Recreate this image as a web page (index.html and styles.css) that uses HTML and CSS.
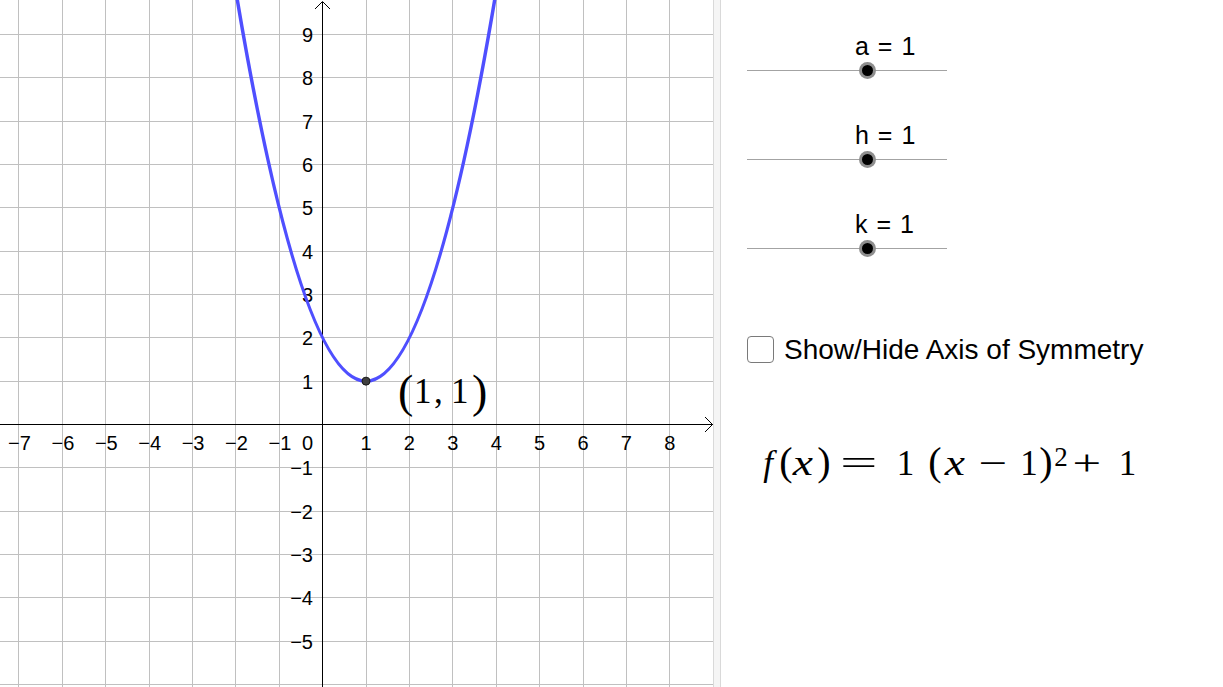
FILE: index.html
```html
<!DOCTYPE html>
<html>
<head>
<meta charset="utf-8">
<title>Vertex form</title>
<link rel="stylesheet" href="styles.css">
</head>
<body>
<div class="app">
  <div class="graph">
    <svg width="713" height="687" viewBox="0 0 713 687">
      <g class="grid">
        <line x1="18.8" y1="0" x2="18.8" y2="687"/>
        <line x1="62.2" y1="0" x2="62.2" y2="687"/>
        <line x1="105.6" y1="0" x2="105.6" y2="687"/>
        <line x1="149" y1="0" x2="149" y2="687"/>
        <line x1="192.4" y1="0" x2="192.4" y2="687"/>
        <line x1="235.8" y1="0" x2="235.8" y2="687"/>
        <line x1="279.2" y1="0" x2="279.2" y2="687"/>
        <line x1="366" y1="0" x2="366" y2="687"/>
        <line x1="409.4" y1="0" x2="409.4" y2="687"/>
        <line x1="452.8" y1="0" x2="452.8" y2="687"/>
        <line x1="496.2" y1="0" x2="496.2" y2="687"/>
        <line x1="539.6" y1="0" x2="539.6" y2="687"/>
        <line x1="583" y1="0" x2="583" y2="687"/>
        <line x1="626.4" y1="0" x2="626.4" y2="687"/>
        <line x1="669.8" y1="0" x2="669.8" y2="687"/>
        <line x1="0" y1="34.35" x2="713" y2="34.35"/>
        <line x1="0" y1="77.7" x2="713" y2="77.7"/>
        <line x1="0" y1="121.05" x2="713" y2="121.05"/>
        <line x1="0" y1="164.4" x2="713" y2="164.4"/>
        <line x1="0" y1="207.75" x2="713" y2="207.75"/>
        <line x1="0" y1="251.1" x2="713" y2="251.1"/>
        <line x1="0" y1="294.45" x2="713" y2="294.45"/>
        <line x1="0" y1="337.8" x2="713" y2="337.8"/>
        <line x1="0" y1="381.15" x2="713" y2="381.15"/>
        <line x1="0" y1="467.85" x2="713" y2="467.85"/>
        <line x1="0" y1="511.2" x2="713" y2="511.2"/>
        <line x1="0" y1="554.55" x2="713" y2="554.55"/>
        <line x1="0" y1="597.9" x2="713" y2="597.9"/>
        <line x1="0" y1="641.25" x2="713" y2="641.25"/>
        <line x1="0" y1="684.6" x2="713" y2="684.6"/>
      </g>
      <g class="axes">
        <line x1="322.5" y1="1.5" x2="322.5" y2="687"/>
        <line x1="0" y1="424.5" x2="712.5" y2="424.5"/>
        <polyline points="315,9 322.5,1.5 330,9"/>
        <polyline points="705,417 712.5,424.5 705,432"/>
      </g>
      <g class="ylabels">
        <text x="313" y="41.8">9</text>
        <text x="313" y="85.2">8</text>
        <text x="313" y="128.5">7</text>
        <text x="313" y="171.9">6</text>
        <text x="313" y="215.2">5</text>
        <text x="313" y="258.6">4</text>
        <text x="313" y="301.9">3</text>
        <text x="313" y="345.3">2</text>
        <text x="313" y="388.6">1</text>
        <text x="313" y="450">0</text>
        <text x="313" y="475.3">−1</text>
        <text x="313" y="518.7">−2</text>
        <text x="313" y="562">−3</text>
        <text x="313" y="605.4">−4</text>
        <text x="313" y="648.7">−5</text>
      </g>
      <g class="xlabels">
        <text x="19.5" y="450">−7</text>
        <text x="62.9" y="450">−6</text>
        <text x="106.3" y="450">−5</text>
        <text x="149.7" y="450">−4</text>
        <text x="193.1" y="450">−3</text>
        <text x="236.5" y="450">−2</text>
        <text x="279.9" y="450">−1</text>
        <text x="366" y="450">1</text>
        <text x="409.4" y="450">2</text>
        <text x="452.8" y="450">3</text>
        <text x="496.2" y="450">4</text>
        <text x="539.6" y="450">5</text>
        <text x="583" y="450">6</text>
        <text x="626.4" y="450">7</text>
        <text x="669.8" y="450">8</text>
      </g>
      <path class="curve" d="M228.77,-52.35 Q366,814.65 503.23,-52.35"/>
      <circle class="vertex" cx="366" cy="381.15" r="4"/>
      <text class="vertex-label" y="403"><tspan class="paren" x="398" y="407">(</tspan><tspan x="414" y="403">1</tspan><tspan x="434" y="403">,</tspan><tspan x="451" y="403">1</tspan><tspan class="paren" x="472" y="407">)</tspan></text>
    </svg>
  </div>
  <div class="divider"></div>
  <div class="panel">
    <div class="slider">
      <div class="slider-label">a = 1</div>
      <div class="track"><span class="thumb"></span></div>
    </div>
    <div class="slider">
      <div class="slider-label">h = 1</div>
      <div class="track"><span class="thumb"></span></div>
    </div>
    <div class="slider">
      <div class="slider-label">k = 1</div>
      <div class="track"><span class="thumb"></span></div>
    </div>
    <label class="check-row"><span class="checkbox"></span><span class="check-text">Show/Hide Axis of Symmetry</span></label>
    <div class="formula"><span class="tk t-f"><i>f</i></span><span class="tk paren t-o1">(</span><span class="tk t-x1"><i class="mx">x</i></span><span class="tk paren t-c1">)</span><span class="tk t-eq"><span class="op-eq">=</span></span><span class="tk t-n1">1</span><span class="tk paren t-o2">(</span><span class="tk t-x2"><i class="mx">x</i></span><span class="tk t-minus"><span class="op-bin">−</span></span><span class="tk t-n2">1</span><span class="tk paren t-c2">)</span><span class="tk t-sup">2</span><span class="tk t-plus"><span class="op-bin">+</span></span><span class="tk t-n3">1</span></div>
  </div>
</div>
</body>
</html>
```

FILE: styles.css
```css
html, body {
  margin: 0;
  padding: 0;
  background: #ffffff;
}

body {
  font-family: "Liberation Sans", Arial, sans-serif;
  color: #000;
}

.app {
  display: flex;
  width: 1223px;
  height: 687px;
  overflow: hidden;
  background: #ffffff;
}

.graph {
  width: 713px;
  height: 687px;
  flex: none;
}

.graph svg {
  display: block;
}

.grid line {
  stroke: #c0c0c0;
  stroke-width: 1;
  shape-rendering: crispEdges;
}

.axes line {
  stroke: #000;
  stroke-width: 1.2;
  shape-rendering: crispEdges;
}

.axes polyline {
  stroke: #000;
  stroke-width: 1;
  fill: none;
}

.ylabels text,
.xlabels text {
  font-family: "Liberation Sans", Arial, sans-serif;
  font-size: 20px;
  fill: #000;
}

.ylabels text {
  text-anchor: end;
}

.xlabels text {
  text-anchor: middle;
}

.curve {
  fill: none;
  stroke: #4f4fff;
  stroke-width: 3.5;
}

.vertex {
  fill: #404040;
  stroke: #1a1a1a;
  stroke-width: 1;
}

.vertex-label {
  font-family: "Liberation Serif", "Times New Roman", serif;
  font-size: 35px;
  fill: #000;
}

.vertex-label .paren {
  font-size: 46px;
}

.divider {
  width: 6px;
  flex: none;
  background: #f5f5f5;
  border-left: 1px solid #d9d9d9;
  border-right: 1px solid #d9d9d9;
}

.panel {
  flex: 1;
  padding: 31px 0 0 26px;
}

.slider {
  width: 200px;
  margin-bottom: 41px;
}

.slider-label {
  font-size: 25px;
  line-height: 30px;
  margin-left: 108px;
  white-space: pre;
  word-spacing: 2px;
}

.track {
  height: 18px;
  display: flex;
  align-items: center;
  background: linear-gradient(#a3a3a3, #a3a3a3) center / 100% 1px no-repeat;
}

.thumb {
  width: 11px;
  height: 11px;
  margin-left: 114.5px;
  border-radius: 50%;
  background: #000;
  box-shadow: 0 0 0 3px #8e8e8e;
}

.check-row {
  display: flex;
  align-items: center;
  gap: 10px;
  height: 27px;
  margin-top: 79px;
}

.checkbox {
  width: 27px;
  height: 27px;
  box-sizing: border-box;
  border: 1.5px solid #7a7a7a;
  border-radius: 4px;
  background: #fff;
  flex: none;
}

.check-text {
  font-size: 28px;
  line-height: 27px;
  white-space: nowrap;
}

.formula {
  margin-top: 79px;
  margin-left: 11px;
  font-family: "Liberation Serif", "Times New Roman", serif;
  font-size: 35px;
  line-height: 40px;
  white-space: nowrap;
}

.tk {
  display: inline-block;
  text-align: center;
}

.tk i {
  font-style: italic;
}

.mx {
  display: inline-block;
  transform: scaleX(1.3);
}

.formula .paren {
  width: 14px;
  font-size: 40px;
  line-height: 40px;
}

.op-eq {
  display: inline-block;
  transform: scaleX(1.9);
}

.op-bin {
  display: inline-block;
  transform: scaleX(1.45);
}

.t-f { width: 12px; margin-left: 4px; }
.t-o1 { margin-left: 5px; }
.t-x1 { width: 16px; margin-left: 2px; }
.t-c1 { margin-left: 6px; }
.t-eq { width: 20px; margin-left: 18px; }
.t-n1 { width: 18px; margin-left: 27.5px; }
.t-o2 { margin-left: 13.5px; }
.t-x2 { width: 16px; margin-left: 5px; }
.t-minus { width: 20px; margin-left: 20px; }
.t-n2 { width: 18px; margin-left: 17px; }
.t-c2 { margin-left: 1px; }
.t-sup {
  width: 14px;
  margin-left: 1px;
  font-size: 27px;
  line-height: 27px;
  vertical-align: 9px;
}
.t-plus { width: 20px; margin-left: 9px; }
.t-n3 { width: 18px; margin-left: 21.5px; }
```
